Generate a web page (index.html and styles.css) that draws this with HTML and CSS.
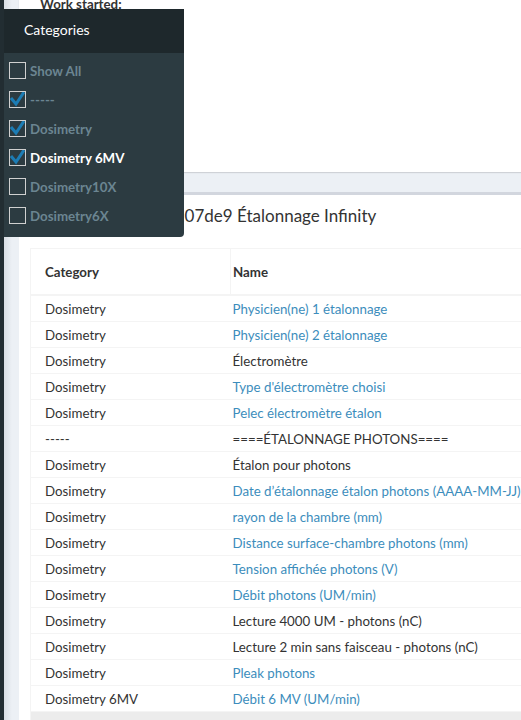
FILE: index.html
```html
<!DOCTYPE html>
<html lang="en">
<head>
    <meta charset="UTF-8">
    <title>Checklist</title>
    <link rel="stylesheet" href="styles.css">
</head>
<body>
    <div class="sidebar-edge"></div>
    <div class="content">
        <div class="box box-top">
            <p class="work-label">Work started:</p>
        </div>
        <div class="box box-main">
            <h3 class="box-title">Checklist 5d9a8ef1107de9 Étalonnage Infinity</h3>
            <table class="tests">
                <thead>
                    <tr>
                        <th class="col-cat">Category</th>
                        <th class="col-name">Name</th>
                    </tr>
                </thead>
                <tbody>
                    <tr><td>Dosimetry</td><td><a href="#">Physicien(ne) 1 étalonnage</a></td></tr>
                    <tr><td>Dosimetry</td><td><a href="#">Physicien(ne) 2 étalonnage</a></td></tr>
                    <tr><td>Dosimetry</td><td>Électromètre</td></tr>
                    <tr><td>Dosimetry</td><td><a href="#">Type d'électromètre choisi</a></td></tr>
                    <tr><td>Dosimetry</td><td><a href="#">Pelec électromètre étalon</a></td></tr>
                    <tr><td>-----</td><td>====ÉTALONNAGE PHOTONS====</td></tr>
                    <tr><td>Dosimetry</td><td>Étalon pour photons</td></tr>
                    <tr><td>Dosimetry</td><td><a href="#">Date d’étalonnage étalon photons (AAAA-MM-JJ)</a></td></tr>
                    <tr><td>Dosimetry</td><td><a href="#">rayon de la chambre (mm)</a></td></tr>
                    <tr><td>Dosimetry</td><td><a href="#">Distance surface-chambre photons (mm)</a></td></tr>
                    <tr><td>Dosimetry</td><td><a href="#">Tension affichée photons (V)</a></td></tr>
                    <tr><td>Dosimetry</td><td><a href="#">Débit photons (UM/min)</a></td></tr>
                    <tr><td>Dosimetry</td><td>Lecture 4000 UM - photons (nC)</td></tr>
                    <tr><td>Dosimetry</td><td>Lecture 2 min sans faisceau - photons (nC)</td></tr>
                    <tr><td>Dosimetry</td><td><a href="#">Pleak photons</a></td></tr>
                    <tr><td>Dosimetry 6MV</td><td><a href="#">Débit 6 MV (UM/min)</a></td></tr>
                    <tr class="sub-row"><td></td><td></td></tr>
                </tbody>
            </table>
        </div>
    </div>

    <div class="cat-menu">
        <div class="cat-header">Categories</div>
        <ul class="cat-list">
            <li><span class="check"></span>Show All</li>
            <li><span class="check"><svg viewBox="0 0 15 15"><polyline points="1,6 6,12 14,0"/></svg></span>-----</li>
            <li><span class="check"><svg viewBox="0 0 15 15"><polyline points="1,6 6,12 14,0"/></svg></span>Dosimetry</li>
            <li class="active"><span class="check"><svg viewBox="0 0 15 15"><polyline points="1,6 6,12 14,0"/></svg></span>Dosimetry 6MV</li>
            <li><span class="check"></span>Dosimetry10X</li>
            <li><span class="check"></span>Dosimetry6X</li>
        </ul>
    </div>
</body>
</html>
```

FILE: styles.css
```css
html {
    overflow: hidden;
}

body {
    margin: 0;
    display: flex;
    font-family: "Lato", "Liberation Sans", sans-serif;
    font-size: 13.3px;
    color: #333;
    background-color: #ecf0f5;
    height: 720px;
}

.sidebar-edge {
    width: 4px;
    flex-shrink: 0;
    background-color: #222d32;
}

.content {
    flex-shrink: 0;
    width: 620px;
    padding-left: 15px;
    background: linear-gradient(to right, #d9dee4 0, #ecf0f5 8px);
}

.box {
    background-color: #fff;
}

.box-top {
    height: 176px;
    margin-top: -4px;
    box-shadow: 0 1px 1px rgba(0, 0, 0, 0.12);
}

.work-label {
    margin: 0;
    padding-left: 21px;
    font-weight: bold;
    line-height: 17px;
}

.box-main {
    margin-top: 20px;
    border-top: 3px solid #d2d6de;
    padding: 0 0 0 11px;
    height: 600px;
}

.box-title {
    margin: 0;
    padding: 10px 0 0 0;
    height: 43px;
    font-size: 17px;
    font-weight: normal;
    line-height: 22px;
    white-space: nowrap;
}

.tests {
    width: 600px;
    border-collapse: collapse;
    border: 1px solid #f4f4f4;
}

.tests th {
    height: 45px;
    text-align: left;
    font-weight: bold;
    border-bottom: 2px solid #f4f4f4;
    padding: 0;
}

.tests th.col-cat {
    width: 185px;
    padding-left: 14px;
    border-right: 1px solid #f4f4f4;
}

.tests th.col-name {
    padding-left: 2px;
}

.tests td {
    height: 25px;
    padding: 0 0 0 14px;
    border-top: 1px solid #f4f4f4;
}

.tests td + td {
    padding-left: 2px;
}

.tests a {
    color: #3c8dbc;
    text-decoration: none;
}

.tests .sub-row td {
    background-color: #ececec;
    height: 20px;
}

.cat-menu {
    position: absolute;
    left: 4px;
    top: 9px;
    width: 180px;
    background-color: #2c3b41;
    border-bottom-right-radius: 4px;
    padding-bottom: 7px;
}

.cat-header {
    background-color: #1e282c;
    color: #fff;
    font-size: 14px;
    height: 44px;
    line-height: 42px;
    padding-left: 20px;
}

.cat-list {
    list-style: none;
    margin: 0;
    padding: 3px 0 0 5px;
}

.cat-list li {
    display: flex;
    align-items: center;
    height: 29px;
    font-weight: bold;
    color: #6b8591;
}

.cat-list li.active {
    color: #fff;
}

.check {
    display: flex;
    width: 15px;
    height: 15px;
    border: 1px solid #d0d0d0;
    margin-right: 4px;
}

.check svg {
    width: 15px;
    height: 15px;
    fill: none;
    stroke: #1c7cb4;
    stroke-width: 3;
}
```
